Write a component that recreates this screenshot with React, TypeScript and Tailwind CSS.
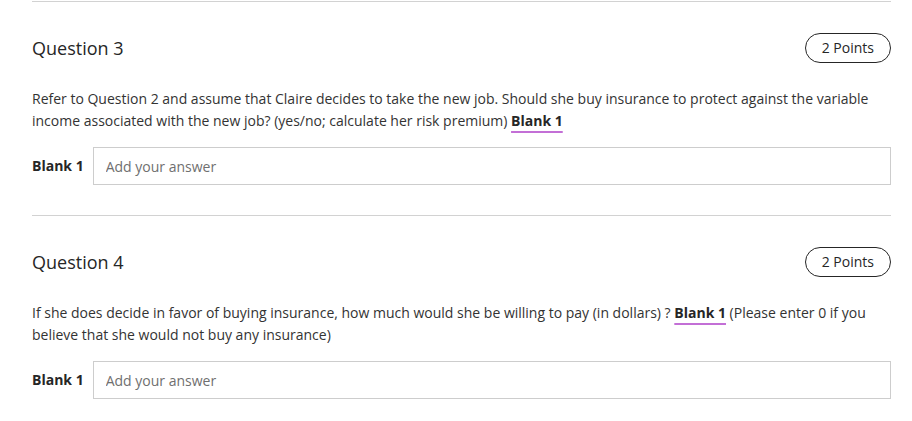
import React from "react";

interface QuestionProps {
  title: string;
  points: string;
  children: React.ReactNode;
}

const BlankRef: React.FC = () => (
  <span className="font-bold text-[#262626] underline decoration-[#c36fd6] decoration-2 underline-offset-[5px]">
    Blank 1
  </span>
);

const Question: React.FC<QuestionProps> = ({ title, points, children }) => (
  <section className="border-t border-[#d2d2d2] pt-[31px] pb-[30px]">
    <div className="flex items-center justify-between h-[30px]">
      <h2 className="text-[18px] leading-6 text-[#262626]">{title}</h2>
      <span className="flex items-center h-[30px] px-4 rounded-full border border-[#262626] text-sm text-[#262626]">
        {points}
      </span>
    </div>
    <p className="mt-[25px] text-sm leading-[22px] text-[#333333]">{children}</p>
    <div className="mt-[15px] flex items-center gap-[9px]">
      <label className="text-sm font-bold text-[#262626]">Blank 1</label>
      <input
        className="flex-1 h-[38px] border border-[#cdcdcd] px-3 text-sm text-[#262626] placeholder:text-[#6f6f6f] outline-none"
        placeholder="Add your answer"
      />
    </div>
  </section>
);

export default function App() {
  return (
    <div
      className="bg-white min-h-screen pl-8 pr-[21px] pt-px"
      style={{ fontFamily: '"Open Sans", "Noto Sans", sans-serif' }}
    >
      <Question title="Question 3" points="2 Points">
        Refer to Question 2 and assume that Claire decides to take the new job. Should she buy insurance to protect
        against the variable income associated with the new job? (yes/no; calculate her risk premium) <BlankRef />
      </Question>
      <Question title="Question 4" points="2 Points">
        If she does decide in favor of buying insurance, how much would she be willing to pay (in dollars) ?{" "}
        <BlankRef /> (Please enter 0 if you believe that she would not buy any insurance)
      </Question>
    </div>
  );
}
